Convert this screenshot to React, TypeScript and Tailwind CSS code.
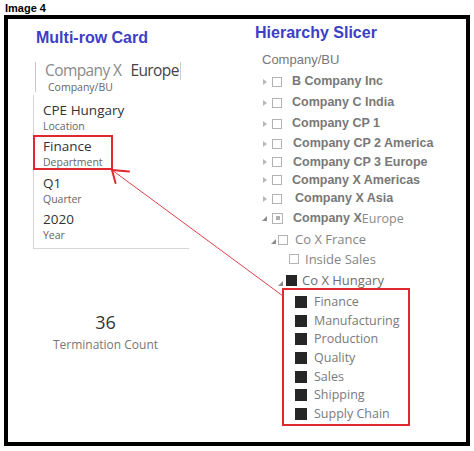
import React from "react";

const Caret = () => (
  <svg width="4" height="6" viewBox="0 0 4 6" className="shrink-0">
    <path d="M0 0L4 3L0 6Z" fill="#b8b8b8" />
  </svg>
);
const CaretOpen = () => (
  <svg width="5" height="5" viewBox="0 0 5 5" className="shrink-0">
    <path d="M5 0L5 5L0 5Z" fill="#8c8c8c" />
  </svg>
);
const Box = () => <span className="block w-[10px] h-[10px] border border-[#b3b3b3] bg-white shrink-0" />;
const PartBox = () => (
  <span className="flex items-center justify-center w-[11px] h-[11px] border border-[#b3b3b3] bg-white shrink-0">
    <span className="block w-[4px] h-[4px] bg-[#b0b0b0]" />
  </span>
);
const Filled = () => <span className="block w-[12px] h-[12px] bg-[#262626] shrink-0" />;

const top = [
  { t: "B Company Inc", h: "h-[21px]", ml: "ml-[10px]" },
  { t: "Company C India", h: "h-[21px]", ml: "ml-[10px]" },
  { t: "Company CP 1", h: "h-[21px]", ml: "ml-[10px]" },
  { t: "Company CP 2 America", h: "h-[19px]", ml: "ml-[11px]" },
  { t: "Company CP 3 Europe", h: "h-[18px]", ml: "ml-[11px]" },
  { t: "Company X Americas", h: "h-[18px]", ml: "ml-[10px]" },
  { t: "Company X Asia", h: "h-[19px]", ml: "ml-[13px]" },
];

const kids = [
  { t: "Finance", h: "h-[19px]" },
  { t: "Manufacturing", h: "h-[19px]" },
  { t: "Production", h: "h-[18px]" },
  { t: "Quality", h: "h-[19px]" },
  { t: "Sales", h: "h-[19px]" },
  { t: "Shipping", h: "h-[18px]" },
  { t: "Supply Chain", h: "h-[19px]" },
];

const items = [
  { v: "CPE Hungary", l: "Location", h: "h-[36px]" },
  { v: "Finance", l: "Department", h: "h-[37px]" },
  { v: "Q1", l: "Quarter", h: "h-[36px]" },
  { v: "2020", l: "Year", h: "h-[37px]" },
];

export default function App() {
  return (
    <div className="relative w-[474px] h-[451px] bg-white overflow-hidden font-['Liberation_Sans',Arial,sans-serif]">
      <div className="h-[15px] pt-[3px] pl-[5px] text-[11px] leading-[11px] font-bold text-black">Image 4</div>
      <div className="ml-[4px] w-[466px] h-[431px] border-4 border-black flex">
        {/* Left column */}
        <div className="w-[232px] flex flex-col">
          <div className="mt-[11px] pl-[28px] text-[16px] leading-[16px] font-bold text-[#3b3fc6]">Multi-row Card</div>
          <div className="mt-[16px] ml-[25px] w-[156px] font-['Open_Sans',sans-serif]">
            <div className="ml-[2px] h-[30px] border-l border-[#c8c8c8] pl-[9px]">
              <div className="flex items-start whitespace-nowrap text-[15.5px] leading-[17px] tracking-[-0.6px]">
                <span className="text-[#8a8a8a]">Company X</span>
                <span className="ml-[9px] text-[#444]">Europe</span>
                <span className="ml-[1px] block h-[18px] border-r border-[#cfcfcf]" />
              </div>
              <div className="mt-[2px] ml-[3px] whitespace-nowrap text-[10.5px] leading-[11px] text-[#666]">Company/BU</div>
            </div>
            <div className="mt-[3px] h-[154px] border-l border-b border-[#d6d6d6] pl-[9px] pt-[7px]">
              {items.map((it) => (
                <div key={it.v} className={it.h}>
                  <div className="text-[13.5px] leading-[17px] text-[#333]">{it.v}</div>
                  <div className="text-[10.5px] leading-[14px] text-[#666]">{it.l}</div>
                </div>
              ))}
            </div>
          </div>
          <div className="mt-[62px] ml-[25px] w-[145px] text-center font-['Open_Sans',sans-serif]">
            <div className="text-[18px] leading-[22px] text-[#333]">36</div>
            <div className="mt-[4px] text-[12px] leading-[16px] text-[#777]">Termination Count</div>
          </div>
        </div>
        {/* Right column */}
        <div className="flex-1 flex flex-col">
          <div className="mt-[6px] pl-[15px] text-[16px] leading-[16px] font-bold text-[#3b3fc6]">Hierarchy Slicer</div>
          <div className="mt-[12px] pl-[22px] text-[13px] leading-[13px] text-[#777]">Company/BU</div>
          <div className="mt-[5px] flex flex-col">
            {top.map((r) => (
              <div key={r.t} className={`${r.h} flex items-center pl-[23px]`}>
                <Caret />
                <span className="ml-[5px]"><Box /></span>
                <span className={`${r.ml} text-[12.5px] leading-[13px] font-bold text-[#787878] whitespace-nowrap`}>{r.t}</span>
              </div>
            ))}
            <div className="h-[20px] flex items-center pl-[22px]">
              <CaretOpen />
              <span className="ml-[5px]"><PartBox /></span>
              <span className="ml-[10px] text-[12.5px] leading-[13px] font-bold text-[#787878] whitespace-nowrap">Company X</span>
              <span className="text-[12.5px] leading-[13px] text-[#8a8a8a] font-['Open_Sans',sans-serif]">Europe</span>
            </div>
            <div className="h-[21px] flex items-center pl-[31px] font-['Open_Sans',sans-serif]">
              <span className="mt-[6px]"><CaretOpen /></span>
              <span className="ml-[2px] mt-[3px]"><Box /></span>
              <span className="ml-[7px] text-[13px] leading-[16px] text-[#858585]">Co X France</span>
            </div>
            <div className="h-[20px] flex items-center pl-[49px] font-['Open_Sans',sans-serif]">
              <Box />
              <span className="ml-[6px] text-[13px] leading-[16px] text-[#858585]">Inside Sales</span>
            </div>
            <div className="h-[19px] flex items-center pt-[3px] pl-[38px] font-['Open_Sans',sans-serif]">
              <span className="mt-[6px]"><CaretOpen /></span>
              <span className="ml-[3px]"><span className="block w-[11px] h-[11px] bg-[#262626]" /></span>
              <span className="ml-[5px] text-[13px] leading-[16px] text-[#6e6e6e]">Co X Hungary</span>
            </div>
            <div className="ml-[42px] w-[128px] border-2 border-[#e0282e] pt-[2px] pb-[1px] font-['Open_Sans',sans-serif]">
              {kids.map((k) => (
                <div key={k.t} className={`${k.h} flex items-center pl-[11px]`}>
                  <Filled />
                  <span className="ml-[7px] text-[12.5px] leading-[16px] text-[#7a7a7a]">{k.t}</span>
                </div>
              ))}
            </div>
          </div>
        </div>
      </div>
      {/* annotations */}
      <div className="absolute left-[33px] top-[135px] w-[80px] h-[35px] border-2 border-[#e0282e]" />
      <svg className="absolute left-0 top-0" width="474" height="451" viewBox="0 0 474 451">
        <line x1="112" y1="170" x2="283" y2="296" stroke="#e0404a" strokeWidth="1" />
        <path d="M112 170 L129 171.5" stroke="#e0282e" strokeWidth="2" fill="none" strokeLinecap="round" />
        <path d="M112 170 L115.5 183" stroke="#e0282e" strokeWidth="2" fill="none" strokeLinecap="round" />
      </svg>
    </div>
  );
}
